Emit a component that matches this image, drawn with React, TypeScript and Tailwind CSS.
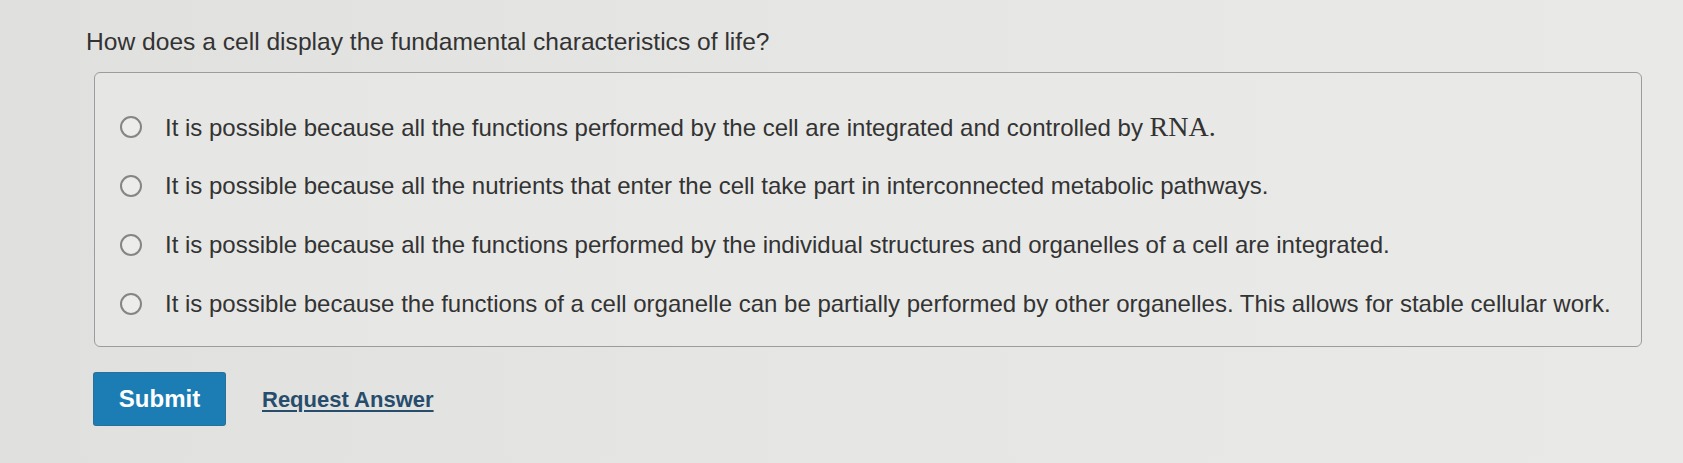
const OPTIONS = [
  'It is possible because all the functions performed by the cell are integrated and controlled by ',
  'It is possible because all the nutrients that enter the cell take part in interconnected metabolic pathways.',
  'It is possible because all the functions performed by the individual structures and organelles of a cell are integrated.',
  'It is possible because the functions of a cell organelle can be partially performed by other organelles. This allows for stable cellular work.',
];

export default function App() {
  return (
    <div className="w-[1683px] h-[463px] overflow-hidden bg-gradient-to-r from-[#e0e0de] via-[#e6e6e4] to-[#e9e9e7] pl-[86px] pt-[28px] font-['Liberation_Sans',Arial,sans-serif] text-[#333]">
      <h1 className="text-[24.6px] leading-[28px]">How does a cell display the fundamental characteristics of life?</h1>

      <div className="mt-[16px] ml-[8px] w-[1548px] h-[275px] rounded-[6px] border border-[#9c9c9c] bg-[#e9e9e7]/60 pl-[25px] pt-[39px] flex flex-col gap-[29px]">
        {OPTIONS.map((o, i) => (
          <label key={i} className="flex items-center h-[30px] text-[24px]">
            <span className="w-[22px] h-[22px] rounded-full border-2 border-[#858585] bg-[#ececea] shrink-0" />
            <span className="ml-[23px] whitespace-nowrap">
              {o}
              {i === 0 && <span className="font-['Liberation_Serif','Times_New_Roman',serif] text-[28px]">RNA.</span>}
            </span>
          </label>
        ))}
      </div>

      <div className="mt-[26px] ml-[8px] flex items-center">
        <button className="w-[131px] h-[52px] rounded-[2px] bg-[#1b7db3] text-white font-bold text-[24px] shadow-[0_0_0_1px_#2a6f96]">
          Submit
        </button>
        <a href="#" className="ml-[37px] text-[#264d6c] font-bold text-[22px] underline underline-offset-[3px]">
          Request Answer
        </a>
      </div>
    </div>
  );
}
